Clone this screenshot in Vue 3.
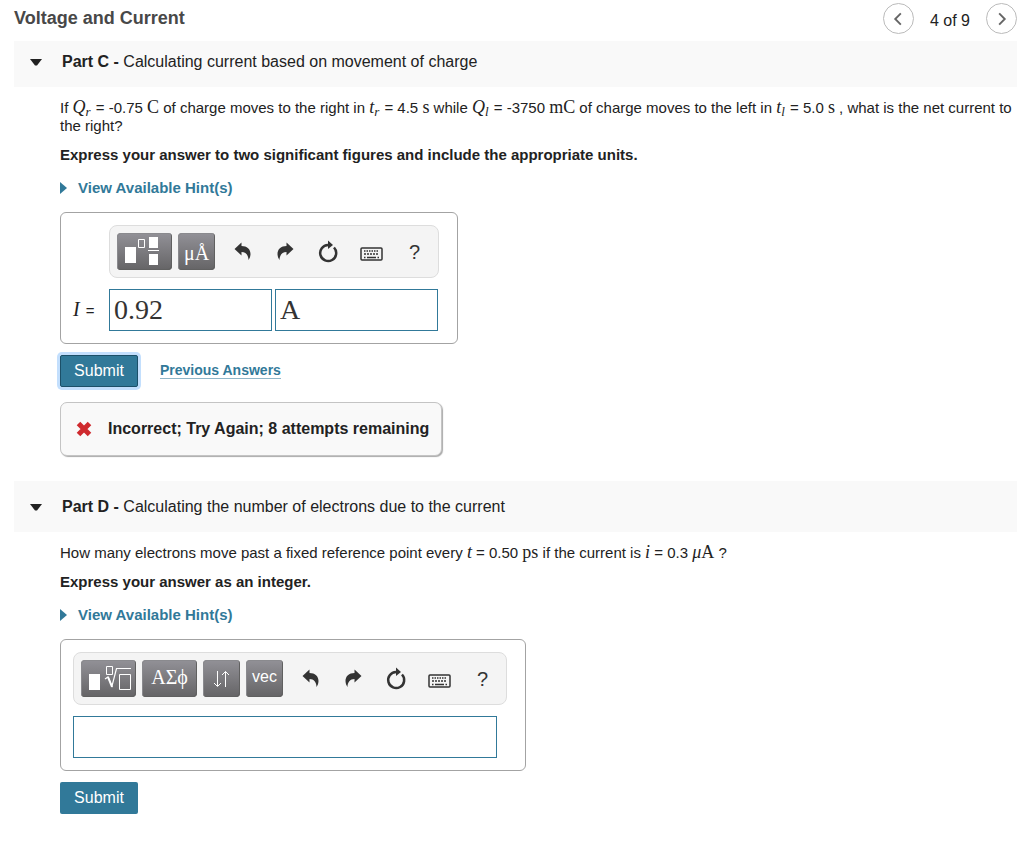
<script setup>
import { ref } from 'vue'

const amount = ref('0.92')
const unit = ref('A')
const electrons = ref('')

const actions = [
  { name: 'undo', label: 'Undo' },
  { name: 'redo', label: 'Redo' },
  { name: 'reset', label: 'Reset' },
  { name: 'keyboard', label: 'Keyboard shortcuts' },
  { name: 'help', label: 'Help' }
]
</script>

<template>
  <main class="page">
    <header class="top">
      <h1>Voltage and Current</h1>
      <nav class="pager" aria-label="Items">
        <button type="button" class="round" aria-label="Previous item">
          <svg viewBox="0 0 31 31"><path d="M18 10 12 16l6 6" /></svg>
        </button>
        <span>4 of 9</span>
        <button type="button" class="round" aria-label="Next item">
          <svg viewBox="0 0 31 31"><path d="m13 10 6 6-6 6" /></svg>
        </button>
      </nav>
    </header>

    <section>
      <h2 class="band">
        <button type="button" class="toggle" aria-expanded="true">
          <svg class="caret" viewBox="0 0 12 7"><path d="M0 0h12L7 6.5H5z" /></svg>
          <span><b>Part C -</b> Calculating current based on movement of charge</span>
        </button>
      </h2>
      <div class="body">
        <p class="question">
          If <span class="var">Q<sub>r</sub></span> = -0.75 <span class="unit">C</span> of charge moves to the right in
          <span class="var">t<sub>r</sub></span> = 4.5 <span class="unit">s</span> while
          <span class="var">Q<sub>l</sub></span> = -3750 <span class="unit">mC</span> of charge moves to the left in
          <span class="var">t<sub>l</sub></span> = 5.0 <span class="unit">s</span> , what is the net current to the right?
        </p>
        <p class="instruction">Express your answer to two significant figures and include the appropriate units.</p>
        <button type="button" class="hint">
          <svg viewBox="0 0 7 12"><path d="M0 0 7 6 0 12z" /></svg>View Available Hint(s)
        </button>

        <div class="answer answer-units">
          <div class="toolbar" role="toolbar" aria-label="Answer tools">
            <button type="button" class="key wide" aria-label="Templates">
              <svg viewBox="0 0 55 37">
                <path d="M8 14h11v16H8zM32 4h9v11h-9zM32 21h9v11h-9zM31 17h11v1H31z" fill="#fff" />
                <path d="M21.5 6.5h6v8h-6z" fill="none" stroke="#fff" />
              </svg>
            </button>
            <button type="button" class="key low serif">μÅ</button>
            <div class="actions">
              <button v-for="a in actions" :key="a.name" type="button" class="action" :aria-label="a.label">
                <svg v-if="a.name === 'undo'" viewBox="0 0 37 37"><path d="M10.5 16 17.5 9.5V13C23 13 26.5 16 26.5 21c0 2.5-1 4.5-2 6C24.5 22.5 22 19 17.5 19v3.5z" /></svg>
                <svg v-else-if="a.name === 'redo'" viewBox="0 0 37 37"><path d="M26.5 16 19.5 9.5V13C14 13 10.5 16 10.5 21c0 2.5 1 4.5 2 6C12.5 22.5 15 19 19.5 19v3.5z" /></svg>
                <svg v-else-if="a.name === 'reset'" viewBox="0 0 37 37">
                  <path d="M18 12a8 8 0 1 0 6 2.5" fill="none" stroke="#333" stroke-width="2.5" /><path d="m18 7.5 5 4.5-5 4z" />
                </svg>
                <svg v-else-if="a.name === 'keyboard'" viewBox="0 0 37 37">
                  <rect x="8" y="15" width="21" height="12" rx="1" fill="none" stroke="#333" stroke-width="1.5" />
                  <path d="M11 18h15" stroke="#333" stroke-width="1.5" stroke-dasharray="1.5 1" />
                  <path d="M11 21h15" stroke="#333" stroke-width="1.5" stroke-dasharray="2 1" />
                  <path d="M11 24.5h1.5m1.5 0h9m1.5 0H26" stroke="#333" stroke-width="1.5" />
                </svg>
                <template v-else>?</template>
              </button>
            </div>
          </div>
          <div class="fields">
            <label for="current-value"><i>I</i> =</label>
            <input id="current-value" v-model="amount" class="field" type="text" />
            <input v-model="unit" class="field" type="text" aria-label="Units" />
          </div>
        </div>

        <div class="row">
          <button type="button" class="submit focused">Submit</button>
          <a href="#" class="previous">Previous Answers</a>
        </div>

        <div class="feedback" role="status">
          <svg viewBox="0 0 16 16"><path d="m2.5 2.5 11 11m0-11-11 11" /></svg>
          Incorrect; Try Again; 8 attempts remaining
        </div>
      </div>
    </section>

    <section class="second">
      <h2 class="band tall">
        <button type="button" class="toggle" aria-expanded="true">
          <svg class="caret" viewBox="0 0 12 7"><path d="M0 0h12L7 6.5H5z" /></svg>
          <span><b>Part D -</b> Calculating the number of electrons due to the current</span>
        </button>
      </h2>
      <div class="body">
        <p class="question">
          How many electrons move past a fixed reference point every <span class="var">t</span> = 0.50
          <span class="unit">ps</span> if the current is <span class="var">i</span> = 0.3
          <span class="unit"><i>μ</i>A</span> ?
        </p>
        <p class="instruction">Express your answer as an integer.</p>
        <button type="button" class="hint">
          <svg viewBox="0 0 7 12"><path d="M0 0 7 6 0 12z" /></svg>View Available Hint(s)
        </button>

        <div class="answer answer-formula">
          <div class="toolbar" role="toolbar" aria-label="Answer tools">
            <button type="button" class="key wide" aria-label="Templates">
              <svg viewBox="0 0 55 37">
                <path d="M8 14h11v16H8z" fill="#fff" />
                <path d="M25.5 6.5h6v8h-6zM38.5 14.5h11v15h-11z" fill="none" stroke="#fff" />
                <path d="m24 19 3-2 4 9 4.5-17.5H50" fill="none" stroke="#fff" stroke-width="1.2" />
                <path d="m27 17 4 10" fill="none" stroke="#fff" stroke-width="2" />
              </svg>
            </button>
            <button type="button" class="key wide high serif">ΑΣϕ</button>
            <button type="button" class="key" aria-label="Subscript and superscript">
              <svg viewBox="0 0 37 37"><path d="M14.5 11v15m-3.5-3 3.5 3.5L18 23M22.5 27V11.5M19 15l3.5-3.5L26 15" fill="none" stroke="#fff" /></svg>
            </button>
            <button type="button" class="key high">vec</button>
            <div class="actions">
              <button v-for="a in actions" :key="a.name" type="button" class="action" :aria-label="a.label">
                <svg v-if="a.name === 'undo'" viewBox="0 0 37 37"><path d="M10.5 16 17.5 9.5V13C23 13 26.5 16 26.5 21c0 2.5-1 4.5-2 6C24.5 22.5 22 19 17.5 19v3.5z" /></svg>
                <svg v-else-if="a.name === 'redo'" viewBox="0 0 37 37"><path d="M26.5 16 19.5 9.5V13C14 13 10.5 16 10.5 21c0 2.5 1 4.5 2 6C12.5 22.5 15 19 19.5 19v3.5z" /></svg>
                <svg v-else-if="a.name === 'reset'" viewBox="0 0 37 37">
                  <path d="M18 12a8 8 0 1 0 6 2.5" fill="none" stroke="#333" stroke-width="2.5" /><path d="m18 7.5 5 4.5-5 4z" />
                </svg>
                <svg v-else-if="a.name === 'keyboard'" viewBox="0 0 37 37">
                  <rect x="8" y="15" width="21" height="12" rx="1" fill="none" stroke="#333" stroke-width="1.5" />
                  <path d="M11 18h15" stroke="#333" stroke-width="1.5" stroke-dasharray="1.5 1" />
                  <path d="M11 21h15" stroke="#333" stroke-width="1.5" stroke-dasharray="2 1" />
                  <path d="M11 24.5h1.5m1.5 0h9m1.5 0H26" stroke="#333" stroke-width="1.5" />
                </svg>
                <template v-else>?</template>
              </button>
            </div>
          </div>
          <div class="fields">
            <input v-model="electrons" class="field long" type="text" aria-label="Number of electrons" />
          </div>
        </div>

        <div class="row">
          <button type="button" class="submit">Submit</button>
        </div>
      </div>
    </section>
  </main>
</template>

<style>
body {
  background: #fff;
}
</style>

<style scoped>
* {
  box-sizing: border-box;
}
.page {
  padding: 3px 7px 24px 14px;
  font-family: "Liberation Sans", Arial, sans-serif;
  font-size: 15px;
  line-height: 18px;
  color: #222;
}
button {
  padding: 0;
  border: 0;
  background: none;
  font: inherit;
  color: inherit;
  cursor: pointer;
}
svg {
  display: block;
}
h1,
h2,
p {
  margin: 0;
}
.top {
  display: flex;
  justify-content: space-between;
  align-items: flex-start;
  height: 38px;
}
h1 {
  font-size: 18px;
  line-height: 30px;
  color: #484848;
}
.pager {
  display: flex;
  align-items: flex-start;
  gap: 16px;
  font-size: 16px;
  line-height: 36px;
}
.round {
  width: 31px;
  height: 31px;
  border: 1px solid #bbb;
  border-radius: 50%;
}
.round svg {
  width: 29px;
  height: 29px;
  fill: none;
  stroke: #666;
  stroke-width: 2;
}
.band {
  height: 46px;
  padding: 11px 16px;
  background: #f9f9f9;
  font-size: 16px;
  font-weight: 400;
  line-height: 20px;
}
.band.tall {
  height: 51px;
  padding-top: 16px;
}
.toggle {
  display: flex;
  align-items: center;
  gap: 20px;
  text-align: left;
}
.caret {
  width: 12px;
  height: 7px;
  fill: #222;
}
.body {
  display: flex;
  flex-direction: column;
  align-items: flex-start;
  padding: 12px 0 0 46px;
}
.question {
  margin-bottom: 11px;
}
.var,
.unit {
  font-family: "Liberation Serif", "Times New Roman", serif;
  font-size: 18px;
  line-height: 16px;
}
.var {
  font-style: italic;
}
.var sub {
  margin-right: 1px;
  font-size: 13px;
  line-height: 8px;
  vertical-align: -3px;
}
.instruction {
  margin-bottom: 14px;
  font-weight: 700;
}
.hint {
  display: flex;
  align-items: center;
  gap: 11px;
  margin-bottom: 14px;
  font-weight: 700;
  line-height: 20px;
  color: #317999;
}
.hint svg {
  width: 7px;
  height: 12px;
  fill: #317999;
}
.answer {
  padding: 12px 18px 12px 12px;
  border: 1px solid #a3a3a3;
  border-radius: 6px;
}
.toolbar {
  display: flex;
  gap: 6px;
  width: max-content;
  padding: 7px 5px 7px 7px;
  border: 1px solid #ddd;
  border-radius: 8px;
  background: #f4f4f4;
}
.answer-units .toolbar {
  margin-left: 36px;
}
.key {
  width: 37px;
  height: 37px;
  border-radius: 4px;
  background: linear-gradient(#929197, #656466);
  box-shadow: inset -1px -1px #606060, inset 1px 1px #8a8a8e;
  font-size: 16px;
  line-height: 32px;
  color: #fff;
}
.key.wide {
  width: 55px;
}
.key.high {
  padding-bottom: 3px;
}
.key.low {
  padding-top: 3px;
}
.key.serif {
  font-family: "Liberation Serif", "Times New Roman", serif;
  font-size: 20px;
}
.actions {
  display: flex;
  gap: 6px;
  margin-left: 3px;
}
.action {
  width: 37px;
  height: 37px;
  font-size: 20px;
  color: #333;
}
.action svg {
  fill: #333;
}
.fields {
  display: flex;
  align-items: center;
  gap: 3px;
  margin-top: 11px;
}
.fields label {
  width: 33px;
}
.fields i {
  margin-right: 2px;
  font-family: "Liberation Serif", "Times New Roman", serif;
  font-size: 20px;
}
.field {
  width: 163px;
  height: 42px;
  padding: 0 4px;
  border: 1px solid #317999;
  border-radius: 0;
  background: #fff;
  font-family: "Liberation Serif", "Times New Roman", serif;
  font-size: 28px;
  color: #333;
}
.field.long {
  width: 424px;
}
.row {
  display: flex;
  align-items: center;
  gap: 22px;
  margin-top: 11px;
}
.submit {
  width: 78px;
  height: 32px;
  border-radius: 2px;
  background: #317999;
  font-size: 16px;
  color: #fff;
}
.submit.focused {
  border: 1px solid #1c5069;
  box-shadow: 0 0 0 3px #c3dffd;
}
.previous {
  border-bottom: 1px solid #8fb6c8;
  font-size: 14px;
  font-weight: 700;
  line-height: 15px;
  text-decoration: none;
  color: #317999;
}
.feedback {
  display: flex;
  align-items: center;
  gap: 16px;
  height: 54px;
  margin-top: 15px;
  padding: 0 12px 0 15px;
  border: 1px solid #c4c4c4;
  border-radius: 7px;
  background: #f9f9f9;
  box-shadow: 1px 1px 1px #aaa;
  font-size: 16px;
  font-weight: 700;
}
.feedback svg {
  width: 16px;
  height: 16px;
  fill: none;
  stroke: #cf2a2e;
  stroke-width: 5;
}
.second {
  margin-top: 25px;
}
</style>
